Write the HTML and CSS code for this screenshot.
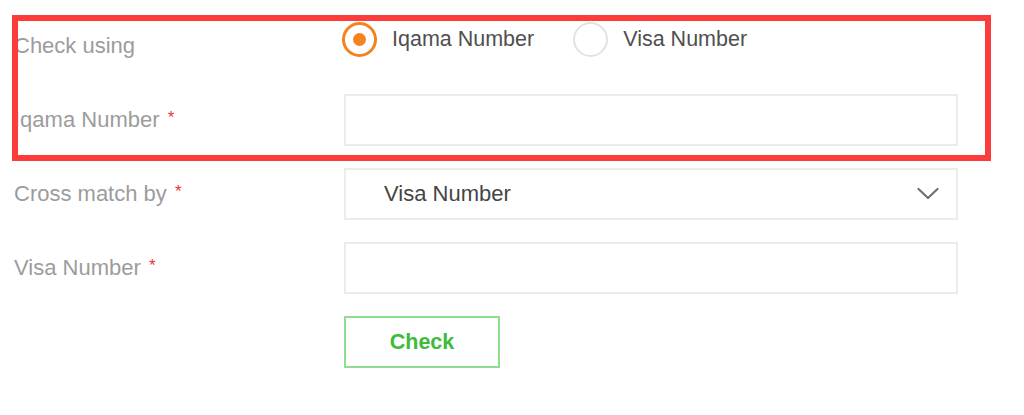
FILE: index.html
```html
<!DOCTYPE html>
<html>
<head>
<meta charset="utf-8">
<link rel="stylesheet" href="styles.css">
</head>
<body>
<div class="page">
  <form class="form">
    <div class="row row-first">
      <div class="label">Check using</div>
      <div class="radios">
        <label class="radio checked"><span class="dot"></span><span class="rtext">Iqama Number</span></label>
        <label class="radio"><span class="dot"></span><span class="rtext">Visa Number</span></label>
      </div>
    </div>
    <div class="row">
      <div class="label">Iqama Number <span class="req">*</span></div>
      <div class="field"></div>
    </div>
    <div class="row">
      <div class="label">Cross match by <span class="req">*</span></div>
      <div class="field select">
        <span class="seltext">Visa Number</span>
        <svg class="chev" width="22" height="14" viewBox="0 0 22 14"><polyline points="1.5,2 11,11 20.5,2" fill="none" stroke="#707070" stroke-width="2.2" stroke-linecap="round" stroke-linejoin="round"/></svg>
      </div>
    </div>
    <div class="row">
      <div class="label">Visa Number <span class="req">*</span></div>
      <div class="field"></div>
    </div>
    <div class="row">
      <div class="label"></div>
      <button type="button" class="btn">Check</button>
    </div>
  </form>
  <div class="highlight"></div>
</div>
</body>
</html>
```
FILE: styles.css
```css
html, body {
  margin: 0;
  padding: 0;
  background: #ffffff;
}
.page {
  position: relative;
  width: 1024px;
  height: 415px;
  overflow: hidden;
  font-family: "Liberation Sans", Arial, sans-serif;
}
.form {
  display: flex;
  flex-direction: column;
  gap: 22px;
  padding: 20px 0 0 14px;
}
.row {
  display: flex;
  align-items: center;
  min-height: 52px;
}
.label {
  width: 330px;
  flex: none;
  font-size: 22px;
  color: #9c9c9c;
  white-space: nowrap;
}
.req {
  color: #ee3333;
  font-size: 17px;
  vertical-align: 4px;
  margin-left: 2px;
}
.radios {
  align-self: flex-start;
  margin-top: 2px;
  margin-left: -2px;
  display: flex;
  align-items: center;
  gap: 39px;
}
.radio {
  display: flex;
  align-items: center;
  gap: 15px;
  font-size: 21.5px;
  color: #4f4f4f;
}
.dot {
  box-sizing: border-box;
  width: 35px;
  height: 35px;
  border-radius: 50%;
  border: 2px solid #e2e2e2;
  display: flex;
  align-items: center;
  justify-content: center;
}
.radio.checked .dot {
  border: 3px solid #f58220;
}
.radio.checked .dot::after {
  content: "";
  width: 13px;
  height: 13px;
  border-radius: 50%;
  background: #f58220;
}
.field {
  box-sizing: border-box;
  width: 614px;
  height: 52px;
  border: 2px solid #ebebeb;
  background: #fff;
}
.select {
  display: flex;
  align-items: center;
  justify-content: space-between;
  padding: 0 17px 0 38px;
}
.seltext {
  font-size: 22px;
  color: #454545;
}
.chev {
  display: block;
}
.btn {
  box-sizing: border-box;
  width: 156px;
  height: 52px;
  border: 2px solid #8fde8f;
  background: #fff;
  color: #3cbb3c;
  font-family: "Liberation Sans", Arial, sans-serif;
  font-weight: bold;
  font-size: 21.5px;
  padding: 0;
}
.highlight {
  position: absolute;
  left: 12px;
  top: 15px;
  width: 979px;
  height: 146px;
  box-sizing: border-box;
  border: 6px solid #fc3b3b;
  pointer-events: none;
}
```
